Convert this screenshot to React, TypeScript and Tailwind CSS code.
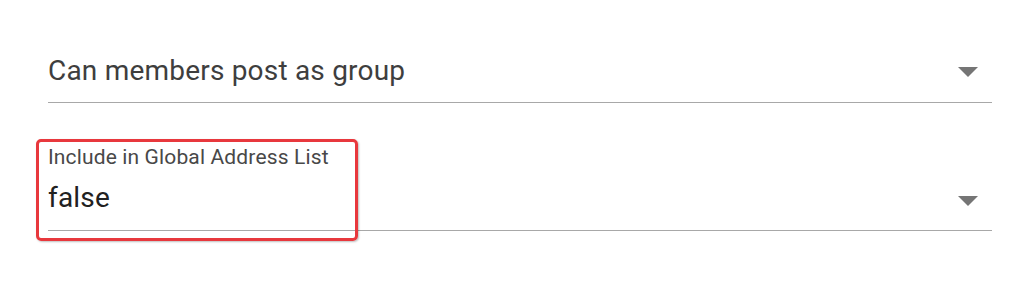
import React from "react";

function Arrow({ className = "" }: { className?: string }) {
  return (
    <svg width="20" height="10" viewBox="0 0 20 10" className={className}>
      <path d="M0 0 L20 0 L10 10 Z" fill="#757575" />
    </svg>
  );
}

export default function App() {
  return (
    <div className="w-[1026px] h-[302px] bg-white pl-[48px] pr-[34px] font-['Roboto',sans-serif]">
      <div className="pt-[53px] pb-[13px] border-b border-[#a8a8a8] flex items-center">
        <div className="flex-1 text-[28px] leading-[36px] tracking-[0.2px] text-[#3e3e3e]">Can members post as group</div>
        <Arrow className="mr-[14px] mt-[2px]" />
      </div>
      <div className="relative pt-[42px] pb-[14px] border-b border-[#a8a8a8]">
        <div className="text-[21px] leading-[24px] tracking-[0.14px] text-[#484848]">Include in Global Address List</div>
        <div className="mt-[11px] flex items-center">
          <div className="flex-1 text-[28px] leading-[36px] tracking-[0.2px] text-[#212121]">false</div>
          <Arrow className="mr-[14px] mt-[6px]" />
        </div>
        <div className="absolute left-[-12px] top-[36px] w-[322px] h-[102px] border-[3px] border-[#e8383d] rounded-[5px] shadow-[1px_1px_2px_rgba(0,0,0,0.25)]" />
      </div>
    </div>
  );
}
